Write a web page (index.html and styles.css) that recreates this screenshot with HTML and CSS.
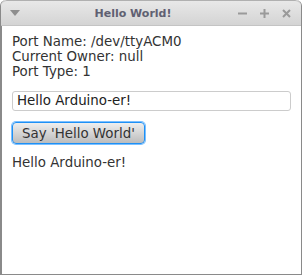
FILE: index.html
```html
<!DOCTYPE html>
<html lang="en">
<head>
  <meta charset="UTF-8">
  <title>Hello World!</title>
  <link rel="stylesheet" href="styles.css">
</head>
<body>

<div class="window">
  <div class="titlebar">
    <svg class="menu-arrow" width="10" height="6" viewBox="0 0 10 6"><path d="M0 0 L10 0 L5 6 Z" fill="#8e8e8e"/></svg>
    <div class="title">Hello World!</div>
    <div class="controls">
      <svg width="9" height="9" viewBox="0 0 9 9"><rect x="0" y="3.5" width="9" height="2" fill="#9a9a9a"/></svg>
      <svg width="9" height="9" viewBox="0 0 9 9"><rect x="0" y="3.5" width="9" height="2" fill="#9a9a9a"/><rect x="3.5" y="0" width="2" height="9" fill="#9a9a9a"/></svg>
      <svg width="9" height="9" viewBox="0 0 9 9"><path d="M1 1 L8 8 M8 1 L1 8" stroke="#9a9a9a" stroke-width="2"/></svg>
    </div>
  </div>

  <div class="content">
    <div class="info">
      <div>Port Name: /dev/ttyACM0</div>
      <div>Current Owner: null</div>
      <div>Port Type: 1</div>
    </div>
    <div class="field">Hello Arduino-er!</div>
    <button class="btn">Say 'Hello World'</button>
    <div class="result">Hello Arduino-er!</div>
  </div>
</div>

</body>
</html>
```

FILE: styles.css
```css
body {
  margin: 0;
  padding: 0;
  background: #ffffff;
  font-family: 'DejaVu Sans', sans-serif;
}

.window {
  width: 302px;
  height: 275px;
  box-sizing: border-box;
  border: 1px solid #8a8a8a;
  border-top: none;
  border-radius: 6px 6px 0 0;
  display: flex;
  flex-direction: column;
  overflow: hidden;
}

.titlebar {
  height: 24px;
  background: linear-gradient(#e8e8e8, #d4d4d4);
  border-top: 1px solid #b0b0b0;
  border-bottom: 1px solid #c4c4c4;
  border-radius: 6px 6px 0 0;
  display: flex;
  align-items: center;
  padding: 0 10px 0 9px;
}

.title {
  flex: 1;
  text-align: center;
  font-weight: bold;
  font-size: 11px;
  color: #606072;
  padding-left: 8px;
}

.controls {
  display: flex;
  gap: 13px;
}

.content {
  flex: 1;
  background: #ffffff;
  border-left: 1px solid #8a8a8a;
  padding: 8px 10px 0 10px;
  font-size: 13.4px;
  color: #333;
}

.info {
  line-height: 15px;
}

.field {
  margin-top: 12px;
  height: 18px;
  border: 1px solid #cccccc;
  border-radius: 3px;
  padding: 0 4px;
  line-height: 18px;
  color: #222;
}

.btn {
  margin-top: 11px;
  display: block;
  width: 133px;
  font-family: 'DejaVu Sans', sans-serif;
  font-size: 13.4px;
  color: #333;
  height: 22px;
  padding: 0;
  border: 1px solid #1e90f5;
  border-radius: 4px;
  box-shadow: 0 0 0 1px #7cc0ff;
  background: linear-gradient(#eeeeee, #bcbcbc);
}

.result {
  margin-top: 11px;
  color: #333;
}
```
